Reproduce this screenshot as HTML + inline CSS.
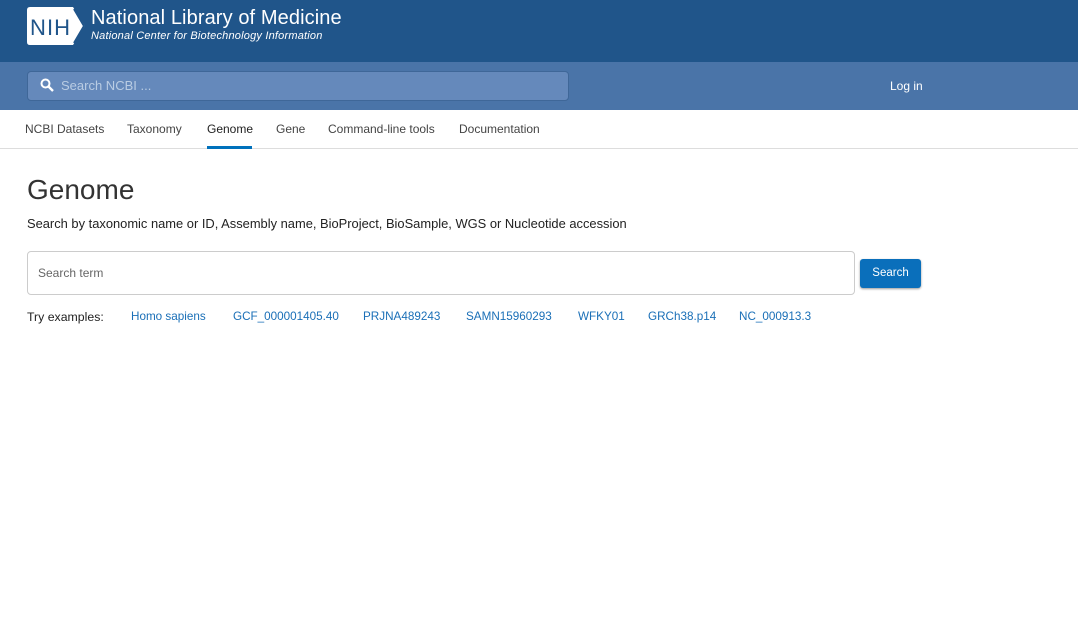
<!DOCTYPE html>
<html><head><meta charset="utf-8"><style>
*{margin:0;padding:0;box-sizing:border-box}
body{width:1078px;height:622px;background:#fff;font-family:"Liberation Sans",sans-serif;overflow:hidden;position:relative}
.top{position:absolute;left:0;top:0;width:1078px;height:62px;background:#20558a}
.bar{position:absolute;left:0;top:62px;width:1078px;height:48px;background:#4a74a8}
.sb{position:absolute;left:27px;top:71px;width:542px;height:30px;background:#6589bb;border:1px solid #3f6798;border-radius:4px;color:#b9cce3;font-size:13px;line-height:28px;padding-left:33px}
.nav{position:absolute;top:110px;left:0;width:1078px;height:39px;border-bottom:1px solid #ddd}
.nav span{position:absolute;top:12px;font-size:12px;color:#444}
a{color:#1a6fb7;text-decoration:none}
</style></head><body>
<div class="top">
 <svg style="position:absolute;left:27px;top:7px" width="58" height="38" viewBox="0 0 58 38">
  <path d="M3 0H46L58 19L46 38H3Q0 38 0 35V3Q0 0 3 0Z" fill="#fff"/>
  <path d="M47 2L57 19L47 36" fill="none" stroke="#20558a" stroke-width="2"/>
  <text x="3" y="28" font-family="Liberation Sans" font-size="22" textLength="40" fill="#20558a">NIH</text>
 </svg>
 <div style="position:absolute;left:91px;top:7px;color:#fff;font-size:20px;letter-spacing:0.1px">National Library of Medicine</div>
 <div style="position:absolute;left:91px;top:30px;color:#fff;font-size:11px;font-style:italic;letter-spacing:0.2px">National Center for Biotechnology Information</div>
</div>
<div class="bar"></div>
<div class="sb">Search NCBI ...</div>
<svg style="position:absolute;left:40px;top:78px" width="14" height="14" viewBox="0 0 14 14"><circle cx="5.5" cy="5.5" r="4" fill="none" stroke="#fff" stroke-width="2"/><path d="M8.5 8.5L13 13" stroke="#fff" stroke-width="2.4"/></svg>
<div style="position:absolute;left:890px;top:79px;color:#fff;font-size:12px">Log in</div>
<div class="nav">
 <span style="left:25px">NCBI Datasets</span>
 <span style="left:127px">Taxonomy</span>
 <span style="left:207px;color:#222">Genome</span>
 <span style="left:276px">Gene</span>
 <span style="left:328px">Command-line tools</span>
 <span style="left:459px">Documentation</span>
 <div style="position:absolute;left:207px;top:36px;width:45px;height:3px;background:#0071bc"></div>
</div>
<div style="position:absolute;left:27px;top:174px;font-size:28px;color:#333">Genome</div>
<div style="position:absolute;left:27px;top:216px;font-size:12.9px;color:#222">Search by taxonomic name or ID, Assembly name, BioProject, BioSample, WGS or Nucleotide accession</div>
<div style="position:absolute;left:27px;top:251px;width:828px;height:44px;border:1px solid #ccc;border-radius:4px;font-size:12px;color:#666;line-height:42px;padding-left:10px">Search term</div>
<div style="position:absolute;left:860px;top:259px;width:61px;height:29px;background:#0a6fbb;border-radius:3px;color:#fff;font-size:11.5px;line-height:29px;text-align:center;box-shadow:0 1px 2px #999">Search</div>
<div style="position:absolute;top:310px;left:0;font-size:11.7px;width:1078px">
 <span style="position:absolute;left:27px;color:#222;font-size:12.3px">Try examples:</span>
 <a style="position:absolute;left:131px">Homo sapiens</a>
 <a style="position:absolute;left:233px">GCF_000001405.40</a>
 <a style="position:absolute;left:363px">PRJNA489243</a>
 <a style="position:absolute;left:466px">SAMN15960293</a>
 <a style="position:absolute;left:578px">WFKY01</a>
 <a style="position:absolute;left:648px">GRCh38.p14</a>
 <a style="position:absolute;left:739px">NC_000913.3</a>
</div>
</body></html>
